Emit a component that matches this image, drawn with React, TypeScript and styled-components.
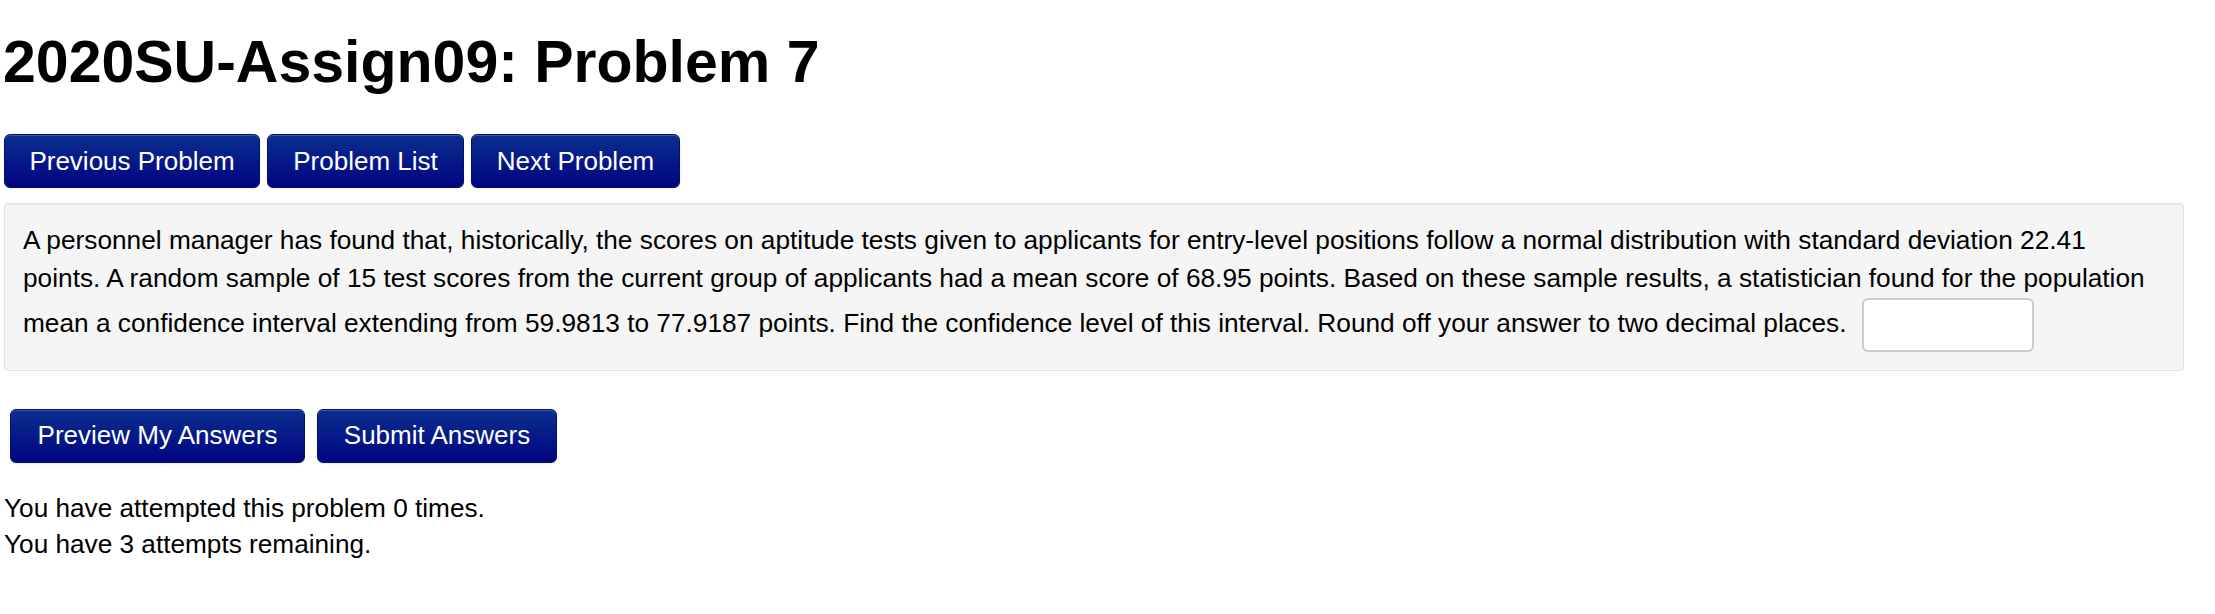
import React from "react";
import styled, { createGlobalStyle } from "styled-components";

const GlobalStyle = createGlobalStyle`
  html, body {
    margin: 0;
    padding: 0;
    background: #ffffff;
  }
  body {
    font-family: "Liberation Sans", Arial, sans-serif;
    font-size: 26px;
    color: #000000;
  }
`;

const Page = styled.div`
  padding: 0 31px 0 4px;
`;

const Title = styled.h1`
  margin: 29px 0 0 -1px;
  font-size: 59px;
  line-height: 66px;
  font-weight: bold;
`;

const NavBar = styled.div`
  display: flex;
  gap: 7px;
  margin-top: 39px;
`;

const NavButton = styled.button<{ $width: number }>`
  width: ${(p) => p.$width}px;
  height: 54px;
  padding: 0;
  border: 1px solid #00136b;
  border-radius: 6px;
  background: linear-gradient(to bottom, #0b2f8e 0%, #000481 100%);
  box-shadow: inset 0 1px 0 rgba(255, 255, 255, 0.2),
    0 1px 2px rgba(0, 0, 0, 0.08);
  color: #ffffff;
  font-family: "Liberation Sans", Arial, sans-serif;
  font-size: 26px;
  cursor: pointer;
`;

const ProblemWell = styled.div`
  margin-top: 15px;
  padding: 17px 18px 18px 18px;
  background: #f5f5f5;
  border: 1px solid #e3e3e3;
  border-radius: 4px;
  box-shadow: inset 0 1px 1px rgba(0, 0, 0, 0.05);
  font-size: 26.25px;
  line-height: 38.4px;
  white-space: nowrap;
`;

const AnswerInput = styled.input`
  box-sizing: border-box;
  width: 172px;
  height: 54px;
  margin-left: 15px;
  vertical-align: middle;
  border: 2px solid #cccccc;
  border-radius: 6px;
  background: #ffffff;
  font-family: "Liberation Sans", Arial, sans-serif;
  font-size: 25.6px;
  padding: 0 8px;
`;

const SubmitBar = styled.div`
  display: flex;
  gap: 12px;
  margin-top: 38px;
  padding-left: 6px;
`;

const Attempts = styled.div`
  margin-top: 27px;
  font-size: 26.2px;
  line-height: 36px;
`;

export default function App() {
  return (
    <>
      <GlobalStyle />
      <Page>
        <Title>2020SU-Assign09: Problem 7</Title>
        <NavBar>
          <NavButton $width={256}>Previous Problem</NavButton>
          <NavButton $width={197}>Problem List</NavButton>
          <NavButton $width={209}>Next Problem</NavButton>
        </NavBar>
        <ProblemWell>
          A personnel manager has found that, historically, the scores on
          aptitude tests given to applicants for entry-level positions follow a
          normal distribution with standard deviation 22.41
          <br />
          points. A random sample of 15 test scores from the current group of
          applicants had a mean score of 68.95 points. Based on these sample
          results, a statistician found for the population
          <br />
          mean a confidence interval extending from 59.9813 to 77.9187 points.
          Find the confidence level of this interval. Round off your answer to
          two decimal places.
          <AnswerInput type="text" aria-label="answer" />
        </ProblemWell>
        <SubmitBar>
          <NavButton $width={295}>Preview My Answers</NavButton>
          <NavButton $width={240}>Submit Answers</NavButton>
        </SubmitBar>
        <Attempts>
          You have attempted this problem 0 times.
          <br />
          You have 3 attempts remaining.
        </Attempts>
      </Page>
    </>
  );
}
